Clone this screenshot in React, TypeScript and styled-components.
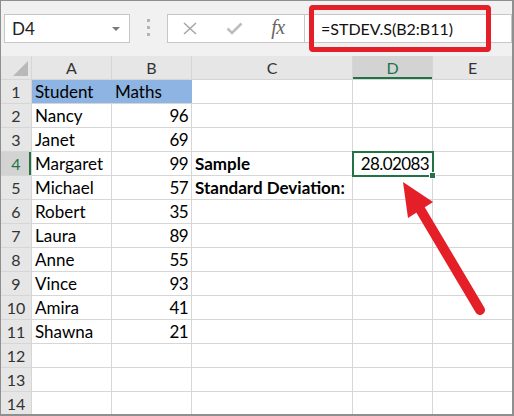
import React from "react";
import styled, { createGlobalStyle, css } from "styled-components";

const GlobalStyle = createGlobalStyle`
  html, body { margin: 0; padding: 0; background: #fff; }
  body { font-family: Lato, "Noto Sans", sans-serif; }
`;

const GREEN = "#217346";

const Frame = styled.div`
  position: relative;
  width: 514px;
  height: 416px;
  box-sizing: border-box;
  border-style: solid;
  border-color: #8f8f8f;
  border-width: 1px 2px 2px 1px;
  background: #f1f1f1;
  overflow: hidden;
  display: flex;
  flex-direction: column;
`;

const FormulaBar = styled.div`
  height: 55px;
  flex: none;
  display: flex;
  align-items: flex-start;
  padding: 13px 0 0 3px;
  box-sizing: border-box;
`;

const NameBox = styled.div`
  width: 126px;
  height: 29px;
  box-sizing: border-box;
  background: #fff;
  border: 1px solid #c6c6c6;
  display: flex;
  align-items: center;
  justify-content: space-between;
  padding: 0 9px 0 7px;
  font-size: 17px;
  color: #222;
`;

const DropArrow = styled.span`
  width: 0;
  height: 0;
  border-left: 4px solid transparent;
  border-right: 4px solid transparent;
  border-top: 4px solid #7a7a7a;
`;

const Grip = styled.div`
  margin: 3px 17px 0 17px;
  display: flex;
  flex-direction: column;
  gap: 4px;
  padding-top: 2px;

  span {
    width: 3px;
    height: 3px;
    background: #b4b4b4;
  }
`;

const ButtonBox = styled.div`
  width: 138px;
  height: 29px;
  box-sizing: border-box;
  background: #fff;
  border: 1px solid #c6c6c6;
  display: flex;
  align-items: center;
`;

const ToolSlot = styled.div`
  width: 44px;
  height: 100%;
  display: flex;
  align-items: center;
  justify-content: center;
`;

const Fx = styled.span`
  font-family: "Liberation Serif", "DejaVu Serif", serif;
  font-style: italic;
  font-size: 20px;
  color: #666;
  letter-spacing: -0.5px;
  margin-top: -3px;
`;

const FormulaInput = styled.div`
  flex: 1;
  height: 29px;
  box-sizing: border-box;
  background: #fff;
  border: 1px solid #c6c6c6;
  border-left: none;
  display: flex;
  align-items: center;
  padding-left: 16px;
  font-size: 16px;
  color: #111;
`;

const Highlight = styled.div`
  position: absolute;
  left: 308px;
  top: 4px;
  width: 182px;
  height: 47px;
  box-sizing: border-box;
  border: 5px solid #e51f27;
  border-radius: 4px;
  pointer-events: none;
`;

const Sheet = styled.div`
  flex: 1;
  display: grid;
  grid-template-columns: 30px 79px 79px 160px 79px 1fr;
  grid-template-rows: 23px;
  grid-auto-rows: 23px;
  gap: 1px;
  background: #d6d6d6;
  overflow: hidden;
`;

const Corner = styled.div`
  background: #e6e6e6;
  position: relative;

  &::after {
    content: "";
    position: absolute;
    right: 3px;
    bottom: 3px;
    width: 0;
    height: 0;
    border-left: 15px solid transparent;
    border-bottom: 15px solid #b9b9b9;
  }
`;

const ColHeader = styled.div<{ $active?: boolean }>`
  background: #e6e6e6;
  display: flex;
  align-items: center;
  justify-content: center;
  font-size: 16px;
  color: #333;
  ${(p) =>
    p.$active &&
    css`
      background: #d3d3d3;
      color: ${GREEN};
      box-shadow: inset 0 -2px 0 ${GREEN};
    `}
`;

const RowHeader = styled.div<{ $active?: boolean }>`
  background: #e6e6e6;
  display: flex;
  align-items: center;
  justify-content: center;
  font-size: 16px;
  color: #333;
  ${(p) =>
    p.$active &&
    css`
      background: #d3d3d3;
      color: ${GREEN};
      box-shadow: inset -2px 0 0 ${GREEN};
    `}
`;

const Cell = styled.div<{
  $right?: boolean;
  $bold?: boolean;
  $fill?: string;
  $selected?: boolean;
}>`
  background: ${(p) => p.$fill || "#fff"};
  box-shadow: ${(p) => (p.$fill ? `1px 0 0 ${p.$fill}` : "none")};
  display: flex;
  align-items: center;
  justify-content: ${(p) => (p.$right ? "flex-end" : "flex-start")};
  padding: 0 3px 0 3px;
  font-size: 17px;
  font-weight: ${(p) => (p.$bold ? 700 : 400)};
  letter-spacing: ${(p) => (p.$right ? "-0.6px" : "0")};
  color: #000;
  white-space: nowrap;
  ${(p) =>
    p.$selected &&
    css`
      position: relative;
      z-index: 1;

      &::before {
        content: "";
        position: absolute;
        left: -1px;
        top: -1px;
        right: -2px;
        bottom: -2px;
        border: 2px solid ${GREEN};
      }

      &::after {
        content: "";
        position: absolute;
        right: -4px;
        bottom: -4px;
        width: 5px;
        height: 5px;
        background: ${GREEN};
        border: 1px solid #fff;
      }
    `}
`;

const Overlay = styled.svg`
  position: absolute;
  left: -1px;
  top: -1px;
  width: 514px;
  height: 416px;
  pointer-events: none;
`;

type Row = { a?: string; b?: string; c?: string; d?: string };

const rows: Row[] = [
  { a: "Student", b: "Maths" },
  { a: "Nancy", b: "96" },
  { a: "Janet", b: "69" },
  { a: "Margaret", b: "99", c: "Sample", d: "28.02083" },
  { a: "Michael", b: "57", c: "Standard Deviation:" },
  { a: "Robert", b: "35" },
  { a: "Laura", b: "89" },
  { a: "Anne", b: "55" },
  { a: "Vince", b: "93" },
  { a: "Amira", b: "41" },
  { a: "Shawna", b: "21" },
  {},
  {},
  {},
];

const columns = ["A", "B", "C", "D", "E"];
const BLUE = "#8db4e2";

const App: React.FC = () => {
  return (
    <>
      <GlobalStyle />
      <Frame>
        <FormulaBar>
          <NameBox>
            D4
            <DropArrow />
          </NameBox>
          <Grip>
            <span />
            <span />
            <span />
          </Grip>
          <ButtonBox>
            <ToolSlot>
              <svg width="14" height="13" viewBox="0 0 14 13">
                <path d="M1 1 L13 12 M13 1 L1 12" stroke="#a3a3a3" strokeWidth="1.4" fill="none" />
              </svg>
            </ToolSlot>
            <ToolSlot>
              <svg width="17" height="13" viewBox="0 0 17 13">
                <path d="M1.5 6.5 L6 11 L15.5 1.5" stroke="#bdbdbd" strokeWidth="2.6" fill="none" />
              </svg>
            </ToolSlot>
            <ToolSlot>
              <Fx>fx</Fx>
            </ToolSlot>
          </ButtonBox>
          <FormulaInput>=STDEV.S(B2:B11)</FormulaInput>
        </FormulaBar>

        <Sheet>
          <Corner />
          {columns.map((c) => (
            <ColHeader key={c} $active={c === "D"}>
              {c}
            </ColHeader>
          ))}
          {rows.map((r, i) => {
            const n = i + 1;
            const header = n === 1;
            return (
              <React.Fragment key={n}>
                <RowHeader $active={n === 4}>{n}</RowHeader>
                <Cell $fill={header ? BLUE : undefined}>{r.a}</Cell>
                <Cell $fill={header ? BLUE : undefined} $right={!header}>
                  {r.b}
                </Cell>
                <Cell $bold>{r.c}</Cell>
                <Cell $right $selected={n === 4}>
                  {r.d}
                </Cell>
                <Cell />
              </React.Fragment>
            );
          })}
        </Sheet>

        <Highlight />

        <Overlay viewBox="0 0 514 416">
          <line x1="420" y1="209" x2="480" y2="310" stroke="#e51f27" strokeWidth="10" strokeLinecap="round" />
          <polygon points="403,182 408,218 433,202" fill="#e51f27" />
        </Overlay>
      </Frame>
    </>
  );
};

export default App;
